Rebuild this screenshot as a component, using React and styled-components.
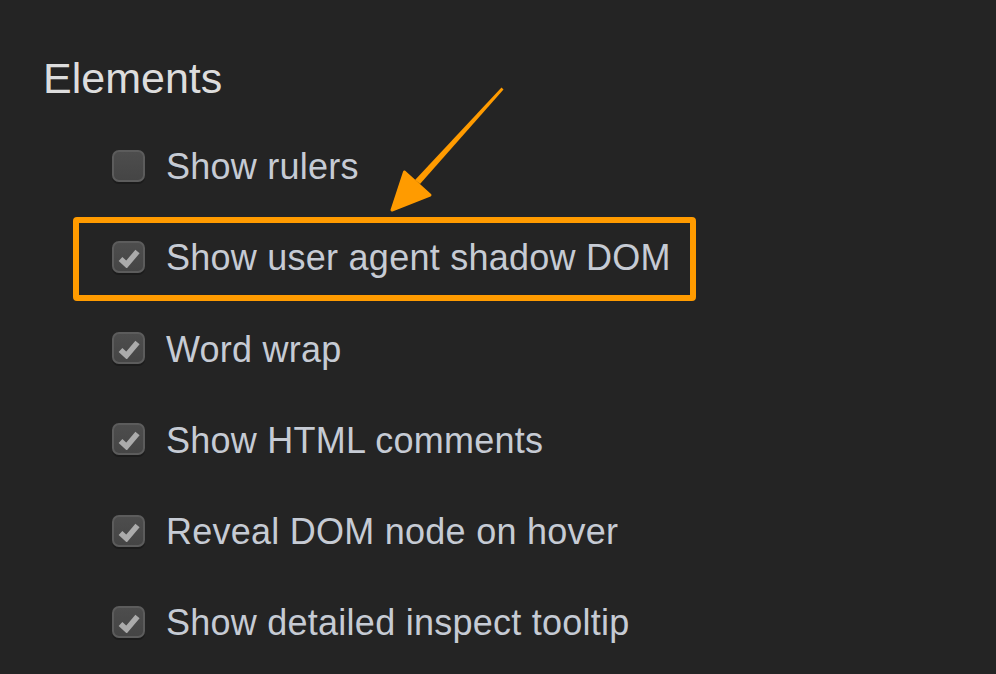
import React from 'react';
import styled, { createGlobalStyle } from 'styled-components';

const GlobalStyle = createGlobalStyle`
    html, body {
        margin: 0;
        padding: 0;
        background: #242424;
    }

    body {
        font-family: "Liberation Sans", Arial, Helvetica, sans-serif;
        -webkit-font-smoothing: antialiased;
    }
`;

const Page = styled.div`
    position: relative;
    width: 996px;
    height: 674px;
    overflow: hidden;
    background: #242424;
    padding: 57px 0 0 42px;
    box-sizing: border-box;
`;

const Heading = styled.h2`
    margin: 0;
    padding-left: 1px;
    font-size: 43px;
    line-height: 42px;
    font-weight: 400;
    color: #dddddd;
`;

const List = styled.div`
    display: flex;
    flex-direction: column;
    margin-top: 22.5px;
    padding-left: 70px;
`;

const Row = styled.label`
    position: relative;
    display: flex;
    align-items: center;
    gap: 21px;
    height: 91.25px;
    font-size: 36px;
    letter-spacing: 0.25px;
    color: #c6cbd4;
`;

const Box = styled.span`
    flex: none;
    display: flex;
    align-items: center;
    justify-content: center;
    width: 33px;
    height: 32px;
    margin-top: -3px;
    box-sizing: border-box;
    border: 2px solid #5c5c5c;
    border-radius: 7px;
    background: linear-gradient(#4d4d4d, #454545);
    box-shadow: 0 2px 0 #1b1b1b;
`;

const Highlight = styled.span`
    position: absolute;
    left: -39px;
    top: 4px;
    width: 623px;
    height: 84px;
    box-sizing: border-box;
    border: 6px solid #ff9b00;
    border-radius: 4px;
    pointer-events: none;
`;

const Arrow = styled.svg`
    position: absolute;
    left: 0;
    top: 0;
`;

const Check = () => (
    <svg width="24" height="22" viewBox="0 0 24 22">
        <path
            d="M3.5 13 L9.5 18.5 L20.5 5.5"
            fill="none"
            stroke="#ababab"
            strokeWidth="5.5"
            strokeLinejoin="miter"
        />
    </svg>
);

const items = [
    { label: 'Show rulers', checked: false },
    { label: 'Show user agent shadow DOM', checked: true, highlight: true },
    { label: 'Word wrap', checked: true },
    { label: 'Show HTML comments', checked: true },
    { label: 'Reveal DOM node on hover', checked: true },
    { label: 'Show detailed inspect tooltip', checked: true },
];

const App = () => (
    <>
        <GlobalStyle />
        <Page>
            <Heading>Elements</Heading>
            <List>
                {items.map((item) => (
                    <Row key={item.label}>
                        <Box>{item.checked && <Check />}</Box>
                        {item.label}
                        {item.highlight && <Highlight />}
                    </Row>
                ))}
            </List>
            <Arrow width="996" height="674" viewBox="0 0 996 674">
                <polygon points="501.5,87.5 503.5,89.5 420,184 415,180" fill="#ff9b00" />
                <polygon
                    points="392,210 404.5,172 430,195"
                    fill="#ff9b00"
                    stroke="#ff9b00"
                    strokeWidth="3"
                    strokeLinejoin="round"
                />
            </Arrow>
        </Page>
    </>
);

export default App;
